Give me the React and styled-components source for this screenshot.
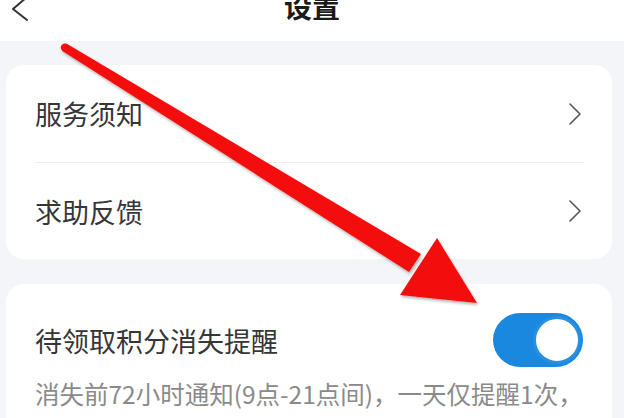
import React from "react";
import styled, { createGlobalStyle } from "styled-components";

const Global = createGlobalStyle`
  html, body { margin: 0; padding: 0; }
  body {
    background: #f4f5f9;
    font-family: "Noto Sans CJK SC", "Noto Sans", sans-serif;
    overflow: hidden;
  }
`;

const Page = styled.div`
  position: relative;
  width: 624px;
  height: 418px;
  overflow: hidden;
  background: #f4f5f9;
`;

const Header = styled.header`
  height: 41px;
  background: #ffffff;
  display: flex;
  align-items: flex-start;
  justify-content: center;
  position: relative;
`;

const Back = styled.svg`
  position: absolute;
  left: 10px;
  top: -4px;
`;

const Title = styled.h1`
  margin: -8px 0 0;
  font-size: 28px;
  line-height: 28px;
  font-weight: 700;
  color: #1a1a1a;
  letter-spacing: 0;
`;

const Card = styled.section`
  background: #ffffff;
  border-radius: 18px;
  margin: ${(p) => p.$top}px 12px 0 6px;
`;

const Row = styled.div`
  height: ${(p) => p.$h}px;
  display: flex;
  align-items: center;
  justify-content: space-between;
  padding: 0 30px 0 29px;
`;

const Label = styled.span`
  font-size: 27px;
  color: #363636;
  line-height: 1;
`;

const Divider = styled.div`
  height: 1px;
  background: #efeff2;
  margin: 0 28px 0 29px;
`;

const SwitchRow = styled.div`
  display: flex;
  align-items: center;
  justify-content: space-between;
  padding: 29px 29px 0 29px;
`;

const Toggle = styled.div`
  width: 90px;
  height: 54px;
  border-radius: 27px;
  background: #1b88e0;
  display: flex;
  align-items: center;
  justify-content: flex-end;
  padding: 0 2px;
  box-sizing: border-box;
`;

const Knob = styled.div`
  width: 48px;
  height: 48px;
  border-radius: 50%;
  background: #ffffff;
  border: 3px solid #2a8fdf;
  box-sizing: border-box;
`;

const Desc = styled.p`
  margin: 9px 20px 0 29px;
  font-size: 24.5px;
  line-height: 36px;
  color: #8a8a8a;
`;

const Overlay = styled.svg`
  position: absolute;
  left: 0;
  top: 0;
  pointer-events: none;
`;

const Chevron = () => (
  <svg width="14" height="24" viewBox="0 0 14 24">
    <polyline
      points="2,2 12,12 2,22"
      fill="none"
      stroke="#555"
      strokeWidth="1.6"
      strokeLinejoin="round"
      strokeLinecap="round"
    />
  </svg>
);

export default function App() {
  return (
    <Page>
      <Global />
      <Header>
        <Back width="20" height="26" viewBox="0 0 20 26">
          <polyline
            points="17,1 3,13 17,24"
            fill="none"
            stroke="#333"
            strokeWidth="2"
            strokeLinecap="round"
            strokeLinejoin="round"
          />
        </Back>
        <Title>设置</Title>
      </Header>

      <Card $top={24}>
        <Row $h={97}>
          <Label>服务须知</Label>
          <Chevron />
        </Row>
        <Divider />
        <Row $h={96}>
          <Label>求助反馈</Label>
          <Chevron />
        </Row>
      </Card>

      <Card $top={25}>
        <SwitchRow>
          <Label>待领取积分消失提醒</Label>
          <Toggle>
            <Knob />
          </Toggle>
        </SwitchRow>
        <Desc>消失前72小时通知(9点-21点间)，一天仅提醒1次，每次提醒一条消息通知</Desc>
      </Card>

      <Overlay width="624" height="418" viewBox="0 0 624 418">
        <defs>
          <filter id="sh" x="-10%" y="-10%" width="130%" height="130%">
            <feDropShadow dx="1" dy="2" stdDeviation="1.5" floodColor="#000" floodOpacity="0.3" />
          </filter>
        </defs>
        <g filter="url(#sh)" fill="#f40c0c">
          <circle cx="65" cy="47.6" r="4.2" />
          <polygon points="67.2,44 421,254 409,272 62.8,51.2" />
          <polygon points="437,238 477,303 400,295" />
        </g>
      </Overlay>
    </Page>
  );
}
